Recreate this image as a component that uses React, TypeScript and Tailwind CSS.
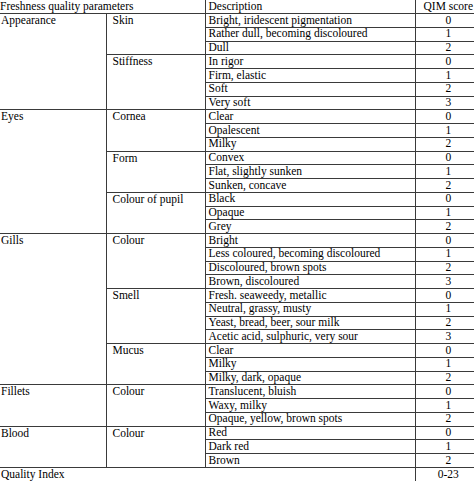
import React from "react";

type Sub = { name: string; items: [string, string][] };
type Group = { name: string; subs: Sub[] };

const groups: Group[] = [
  {
    name: "Appearance",
    subs: [
      { name: "Skin", items: [["Bright, iridescent pigmentation", "0"], ["Rather dull, becoming discoloured", "1"], ["Dull", "2"]] },
      { name: "Stiffness", items: [["In rigor", "0"], ["Firm, elastic", "1"], ["Soft", "2"], ["Very soft", "3"]] },
    ],
  },
  {
    name: "Eyes",
    subs: [
      { name: "Cornea", items: [["Clear", "0"], ["Opalescent", "1"], ["Milky", "2"]] },
      { name: "Form", items: [["Convex", "0"], ["Flat, slightly sunken", "1"], ["Sunken, concave", "2"]] },
      { name: "Colour of pupil", items: [["Black", "0"], ["Opaque", "1"], ["Grey", "2"]] },
    ],
  },
  {
    name: "Gills",
    subs: [
      { name: "Colour", items: [["Bright", "0"], ["Less coloured, becoming discoloured", "1"], ["Discoloured, brown spots", "2"], ["Brown, discoloured", "3"]] },
      { name: "Smell", items: [["Fresh. seaweedy, metallic", "0"], ["Neutral, grassy, musty", "1"], ["Yeast, bread, beer, sour milk", "2"], ["Acetic acid, sulphuric, very sour", "3"]] },
      { name: "Mucus", items: [["Clear", "0"], ["Milky", "1"], ["Milky, dark, opaque", "2"]] },
    ],
  },
  {
    name: "Fillets",
    subs: [{ name: "Colour", items: [["Translucent, bluish", "0"], ["Waxy, milky", "1"], ["Opaque, yellow, brown spots", "2"]] }],
  },
  {
    name: "Blood",
    subs: [{ name: "Colour", items: [["Red", "0"], ["Dark red", "1"], ["Brown", "2"]] }],
  },
];

const line = "border-[#3a3a3a]";

export default function App() {
  const rows: React.ReactNode[] = [];
  groups.forEach((g) => {
    const total = g.subs.reduce((n, s) => n + s.items.length, 0);
    g.subs.forEach((s, si) => {
      s.items.forEach(([desc, score], ii) => (
        rows.push(
          <tr key={g.name + s.name + desc} className="h-[13.75px]">
            {si === 0 && ii === 0 && (
              <td rowSpan={total} className={"align-top pl-[1px] pt-[1px] border-b border-r " + line}>{g.name}</td>
            )}
            {ii === 0 && (
              <td rowSpan={s.items.length} className={"align-top pl-[6px] pt-[1px] border-b border-r " + line}>{s.name}</td>
            )}
            <td className={"pl-[3px] border-b border-r " + line}>{desc}</td>
            <td className={"text-center border-b " + line}>{score}</td>
          </tr>
        )
      ));
    });
  });

  return (
    <div className="w-[474px] h-[481px] overflow-hidden bg-white">
      <table
        className="w-[481px] table-fixed border-collapse text-[11.5px] leading-none text-black"
        style={{ fontFamily: '"Liberation Serif", "Times New Roman", serif' }}
      >
        <colgroup>
          <col className="w-[106px]" />
          <col className="w-[99px]" />
          <col className="w-[210px]" />
          <col className="w-[66px]" />
        </colgroup>
        <tbody>
          <tr className="h-[13.5px]">
            <td colSpan={2} className={"whitespace-nowrap border-b border-r " + line}>Freshness quality parameters</td>
            <td className={"pl-[3px] border-b border-r " + line}>Description</td>
            <td className={"text-center whitespace-nowrap border-b " + line}>QIM score</td>
          </tr>
          {rows}
          <tr className="h-[14px]">
            <td colSpan={3} className={"pl-[1px] border-r " + line}>Quality Index</td>
            <td className="text-center">0-23</td>
          </tr>
        </tbody>
      </table>
    </div>
  );
}
